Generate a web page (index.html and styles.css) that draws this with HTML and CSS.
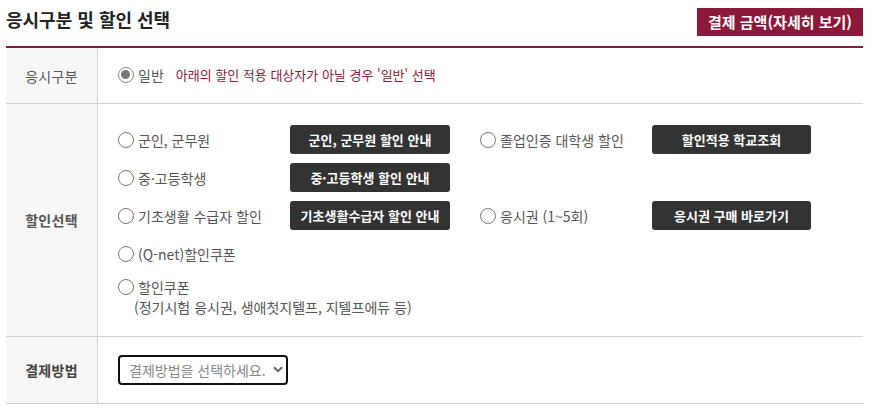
FILE: index.html
```html
<!DOCTYPE html>
<html lang="ko">
<head>
<meta charset="utf-8">
<title>응시구분 및 할인 선택</title>
<link rel="stylesheet" href="styles.css">
</head>
<body>
<div class="page">
  <div class="header">
    <h2 class="title">응시구분 및 할인 선택</h2>
    <button class="pay-btn" type="button">결제 금액(자세히 보기)</button>
  </div>
  <div class="table">
    <div class="row row-type">
      <div class="th">응시구분</div>
      <div class="td">
        <label class="opt"><input type="radio" name="type" checked><span>일반</span></label>
        <span class="notice">아래의 할인 적용 대상자가 아닐 경우 '일반' 선택</span>
      </div>
    </div>
    <div class="row row-disc">
      <div class="th th-bold">할인선택</div>
      <div class="td">
        <div class="disc-grid">
          <div class="item"><label class="opt"><input type="radio" name="type"><span>군인, 군무원</span></label><button class="dark-btn" type="button">군인, 군무원 할인 안내</button></div>
          <div class="item"><label class="opt"><input type="radio" name="type"><span>졸업인증 대학생 할인</span></label><button class="dark-btn" type="button">할인적용 학교조회</button></div>
          <div class="item"><label class="opt"><input type="radio" name="type"><span>중·고등학생</span></label><button class="dark-btn" type="button">중·고등학생 할인 안내</button></div>
          <div class="item empty"></div>
          <div class="item"><label class="opt"><input type="radio" name="type"><span>기초생활 수급자 할인</span></label><button class="dark-btn" type="button">기초생활수급자 할인 안내</button></div>
          <div class="item"><label class="opt"><input type="radio" name="type"><span>응시권 (1~5회)</span></label><button class="dark-btn" type="button">응시권 구매 바로가기</button></div>
          <div class="item"><label class="opt"><input type="radio" name="type"><span>(Q-net)할인쿠폰</span></label></div>
          <div class="item empty"></div>
          <div class="item item-coupon"><label class="opt opt-top"><input type="radio" name="type"><span class="coupon-text"><span>할인쿠폰</span><span class="sub">(정기시험 응시권, 생애첫지텔프, 지텔프에듀 등)</span></span></label></div>
        </div>
      </div>
    </div>
    <div class="row row-pay">
      <div class="th th-bold th-dark">결제방법</div>
      <div class="td">
        <div class="select-wrap">
          <select class="select">
            <option>결제방법을 선택하세요.</option>
          </select>
          <svg class="chev" width="10" height="7" viewBox="0 0 10 7"><path d="M1 1.2 L5 5.2 L9 1.2" fill="none" stroke="#666" stroke-width="2"/></svg>
        </div>
      </div>
    </div>
  </div>
</div>
</body>
</html>
```
FILE: styles.css
```css
* { box-sizing: border-box; }
html, body { margin: 0; padding: 0; background: #fff; }
body {
  font-family: "Noto Sans CJK KR", "Noto Sans", sans-serif;
  color: #555;
  font-size: 14px;
}
.page {
  padding: 8px 11px 0 6px;
  width: 874px;
}
.header {
  display: flex;
  justify-content: space-between;
  align-items: flex-start;
  height: 28px;
  margin-bottom: 10px;
}
.title {
  margin: 0;
  font-size: 18px;
  line-height: 22px;
  font-weight: 700;
  color: #222;
}
.pay-btn {
  width: 166px;
  height: 28px;
  border: 0;
  border-radius: 0;
  background: #8b1a3a;
  color: #fff;
  font-family: inherit;
  font-size: 15px;
  font-weight: 700;
  line-height: 28px;
  padding: 0;
}
.table {
  border-top: 2px solid #8b1a3a;
}
.row {
  display: flex;
  border-bottom: 1px solid #cfcfcf;
}
.th {
  width: 92px;
  flex: none;
  background: #f7f7f7;
  border-right: 1px solid #cfcfcf;
  display: flex;
  align-items: center;
  justify-content: center;
  font-size: 14px;
  color: #555;
  letter-spacing: 0.3px;
}
.th-bold { font-weight: 700; }
.th-dark { color: #444; }
.td {
  flex: 1;
  padding-left: 20px;
  display: flex;
  align-items: center;
}
.row-type { height: 56px; }
.row-type .td { padding-bottom: 2px; }
.row-disc .td { padding-top: 21px; padding-bottom: 19px; align-items: flex-start; }
.row-pay { height: 67px; }

.opt {
  display: flex;
  align-items: center;
  color: #555;
  font-size: 14px;
  line-height: 18px;
}
.opt input {
  appearance: none;
  -webkit-appearance: none;
  margin: 0 4px 0 0;
  width: 16px;
  height: 16px;
  border: 1px solid #777;
  border-radius: 50%;
  background: #fff;
  flex: none;
  position: relative;
}
.opt input:checked {
  border: 1.5px solid #888;
}
.opt input:checked::after {
  content: "";
  position: absolute;
  left: 2px;
  top: 2px;
  width: 9px;
  height: 9px;
  border-radius: 50%;
  background: #777;
}
.notice {
  margin-left: 12px;
  color: #8b1a3a;
  font-size: 13px;
  line-height: 18px;
}
.disc-grid {
  display: grid;
  grid-template-columns: 332px 331px;
  column-gap: 30px;
  row-gap: 9px;
}
.item {
  display: flex;
  align-items: center;
  height: 29px;
}
.item .opt { width: 172px; flex: none; }
.item-coupon {
  grid-column: 1 / span 2;
  height: 40px;
  align-items: flex-start;
}
.item-coupon .opt { width: auto; }
.opt-top { align-items: flex-start; line-height: 20px; }
.opt-top input { margin-top: 2px; }
.coupon-text { display: flex; flex-direction: column; }
.coupon-text .sub { margin-left: -4px; }
.dark-btn {
  width: 160px;
  height: 29px;
  border: 0;
  border-radius: 3px;
  background: #333;
  color: #fff;
  font-family: inherit;
  font-size: 13px;
  font-weight: 700;
  padding: 0;
}
.select-wrap {
  position: relative;
  width: 170px;
  height: 30px;
}
.select {
  appearance: none;
  -webkit-appearance: none;
  width: 170px;
  height: 30px;
  border: 2px solid #111;
  border-radius: 4px;
  background: #fff;
  padding: 0 0 0 9px;
  font-family: inherit;
  font-size: 14px;
  color: #888;
  outline: none;
}
.chev {
  position: absolute;
  right: 5px;
  top: 11px;
  pointer-events: none;
}
```
